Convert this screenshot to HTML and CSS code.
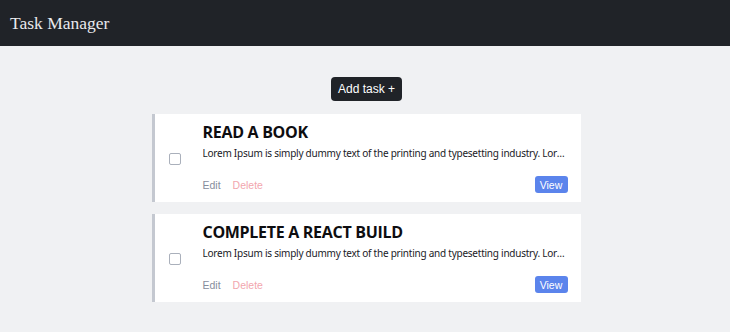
FILE: index.html
```html
<!DOCTYPE html>
<html lang="en">
<head>
  <meta charset="UTF-8" />
  <title>Task Manager</title>
  <link rel="stylesheet" href="styles.css">
</head>
<body>
  <header class="topbar">
    <h1>Task Manager</h1>
  </header>

  <main class="page">
    <button class="add-btn">Add task +</button>

    <!-- Task 1 -->
    <div class="task">
      <div class="check"><input type="checkbox" /></div>
      <div class="body">
        <h2>READ A BOOK</h2>
        <p>Lorem Ipsum is simply dummy text of the printing and typesetting industry. Lorem Ipsum has been the industry's standard dummy text ever since the 1500s</p>
        <div class="actions">
          <span class="edit">Edit</span>
          <span class="delete">Delete</span>
          <button class="view">View</button>
        </div>
      </div>
    </div>

    <!-- Task 2 -->
    <div class="task">
      <div class="check"><input type="checkbox" /></div>
      <div class="body">
        <h2>COMPLETE A REACT BUILD</h2>
        <p>Lorem Ipsum is simply dummy text of the printing and typesetting industry. Lorem Ipsum has been the industry's standard dummy text ever since the 1500s</p>
        <div class="actions">
          <span class="edit">Edit</span>
          <span class="delete">Delete</span>
          <button class="view">View</button>
        </div>
      </div>
    </div>
  </main>
</body>
</html>
```

FILE: styles.css
```css
body {
  margin: 0;
  background: #f0f1f3;
  font-family: "Liberation Sans", Arial, sans-serif;
}
.topbar {
  background: #202328;
  height: 46px;
  padding: 0 10px;
  display: flex;
  align-items: center;
}
.topbar h1 {
  margin: 0;
  font-family: "Liberation Serif", serif;
  font-weight: normal;
  font-size: 17.5px;
  color: #e9e9ec;
}
.page {
  display: flex;
  flex-direction: column;
  align-items: center;
  padding-top: 31px;
}
.add-btn {
  background: #202328;
  color: #fff;
  border: none;
  border-radius: 4px;
  font-family: "Liberation Sans", Arial, sans-serif;
  font-size: 12px;
  height: 24px;
  width: 71px;
  padding: 0;
  margin-bottom: 13px;
  margin-left: 3px;
}
.task {
  width: 429px;
  height: 88px;
  background: #fff;
  border-left: 3px solid #c4c8d0;
  display: flex;
  margin-bottom: 12px;
  margin-left: 2px;
  box-sizing: border-box;
}
.check {
  width: 48px;
  padding-left: 14px;
  box-sizing: border-box;
  display: flex;
  align-items: center;
}
.check input {
  width: 12px;
  height: 12px;
  margin: 1px 0 0;
  appearance: none;
  border: 1px solid #aab0bb;
  border-radius: 2px;
}
.body {
  flex: 1;
  padding: 8px 13px 0 0;
  min-width: 0;
}
.body h2 {
  margin: 0;
  font-family: "Open Sans", sans-serif;
  font-weight: 700;
  font-size: 16px;
  letter-spacing: -0.3px;
  line-height: 20px;
  color: #0d0d10;
}
.body p {
  margin: 4px 0 0;
  font-family: "Noto Sans", sans-serif;
  font-size: 10px;
  letter-spacing: -0.24px;
  line-height: 14px;
  color: #1a1a1f;
  white-space: nowrap;
  overflow: hidden;
  text-overflow: ellipsis;
}
.actions {
  display: flex;
  align-items: center;
  margin-top: 16px;
  font-size: 10.5px;
}
.edit {
  color: #878d9c;
}
.delete {
  color: #f2a6ae;
  margin-left: 12px;
}
.view {
  margin-left: auto;
  background: #5b84ec;
  color: #fff;
  border: none;
  border-radius: 3px;
  font-family: "Liberation Sans", Arial, sans-serif;
  font-size: 10.5px;
  width: 33px;
  height: 17px;
  padding: 0;
}
```
